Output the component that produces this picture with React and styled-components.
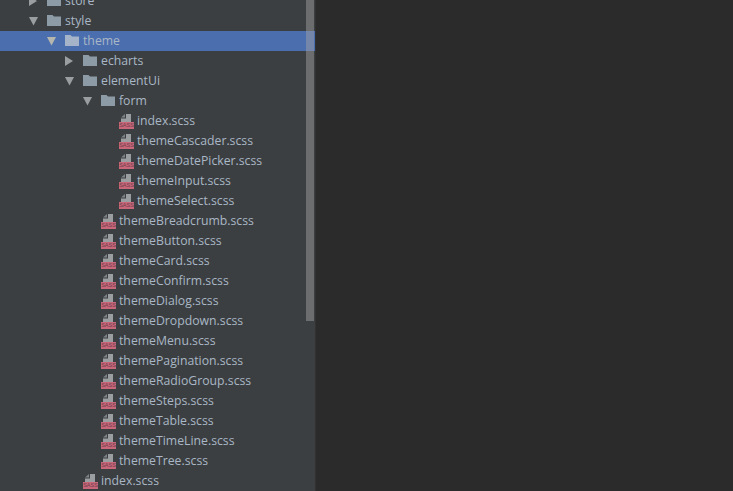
import * as React from "react";
import styled, { createGlobalStyle } from "styled-components";

const GlobalStyle = createGlobalStyle`
  html, body {
    margin: 0;
    height: 100%;
    overflow: hidden;
    background: #2b2b2b;
  }
`;

//Whole window, tree on the left and the empty editor on the right
const Layout = styled.div`
  display: flex;
  width: 733px;
  height: 491px;
  overflow: hidden;
`;

const Sidebar = styled.div`
  position: relative;
  width: 315px;
  height: 100%;
  flex-shrink: 0;
  background: #3c3f41;
  overflow: hidden;
`;

const Divider = styled.div`
  width: 1px;
  flex-shrink: 0;
  background: #323232;
`;

const Editor = styled.div`
  flex: 1;
  background: #2b2b2b;
`;

//Tree is scrolled so the first row is cut off at the top
const Tree = styled.div`
  display: flex;
  flex-direction: column;
  margin-top: -9px;
`;

const Row = styled.div`
  display: flex;
  align-items: center;
  height: 20px;
  flex-shrink: 0;
  padding-left: ${({ $indent }) => $indent}px;
  background: ${({ $selected }) => ($selected ? "#4b6eaf" : "transparent")};
`;

const Arrow = styled.svg`
  width: 9px;
  height: 10px;
  margin-right: 9px;
  margin-bottom: 1px;
  flex-shrink: 0;
`;

const FolderIcon = styled.svg`
  width: 14px;
  height: 11px;
  margin-right: 4px;
  margin-bottom: 1px;
  flex-shrink: 0;
`;

const SassIcon = styled.div`
  position: relative;
  width: 15px;
  height: 20px;
  margin-right: 3px;
  flex-shrink: 0;
`;

const SassSheet = styled.svg`
  position: absolute;
  left: 2px;
  top: 3px;
  width: 10px;
  height: 8px;
`;

const SassBadge = styled.span`
  position: absolute;
  left: 0;
  top: 11px;
  width: 15px;
  height: 7px;
  background: #c8667a;
  color: #6b4049;
  font-family: "Liberation Sans", sans-serif;
  font-size: 5.5px;
  line-height: 7px;
  text-align: center;
  overflow: hidden;
`;

const Label = styled.span`
  font-family: "Open Sans", sans-serif;
  font-size: 12.25px;
  line-height: 20px;
  color: #a9b7c6;
  white-space: nowrap;
`;

const Scrollbar = styled.div`
  position: absolute;
  top: 0;
  right: 1px;
  width: 8px;
  height: 321px;
  background: rgba(166, 166, 166, 0.45);
`;

const rows = [
  { name: "store", depth: 1, folder: true, open: false },
  { name: "style", depth: 1, folder: true, open: true },
  { name: "theme", depth: 2, folder: true, open: true, selected: true },
  { name: "echarts", depth: 3, folder: true, open: false },
  { name: "elementUi", depth: 3, folder: true, open: true },
  { name: "form", depth: 4, folder: true, open: true },
  { name: "index.scss", depth: 5 },
  { name: "themeCascader.scss", depth: 5 },
  { name: "themeDatePicker.scss", depth: 5 },
  { name: "themeInput.scss", depth: 5 },
  { name: "themeSelect.scss", depth: 5 },
  { name: "themeBreadcrumb.scss", depth: 4 },
  { name: "themeButton.scss", depth: 4 },
  { name: "themeCard.scss", depth: 4 },
  { name: "themeConfirm.scss", depth: 4 },
  { name: "themeDialog.scss", depth: 4 },
  { name: "themeDropdown.scss", depth: 4 },
  { name: "themeMenu.scss", depth: 4 },
  { name: "themePagination.scss", depth: 4 },
  { name: "themeRadioGroup.scss", depth: 4 },
  { name: "themeSteps.scss", depth: 4 },
  { name: "themeTable.scss", depth: 4 },
  { name: "themeTimeLine.scss", depth: 4 },
  { name: "themeTree.scss", depth: 4 },
  { name: "index.scss", depth: 3 },
];

const TreeArrow = ({ open, selected }) => (
  <Arrow viewBox="0 0 9 10">
    {open ? (
      <path d="M0 1 H9 L4.5 9.5 Z" fill={selected ? "#b5b6ad" : "#9a9ea1"} />
    ) : (
      <path d="M0 0 L8 5 L0 10 Z" fill="#9a9ea1" />
    )}
  </Arrow>
);

const Folder = ({ selected }) => (
  <FolderIcon viewBox="0 0 14 11">
    <path d="M0 0 H5.5 L7 1.5 H14 V11 H0 Z" fill={selected ? "#a5b4c8" : "#8c9ba5"} />
  </FolderIcon>
);

const SassFile = () => (
  <SassIcon>
    <SassSheet viewBox="0 0 10 8">
      <path d="M5 0 H10 V8 H0 V4.5 H5 Z" fill="#9a9ea1" />
      <path d="M0 3.5 L4 0 V3.5 Z" fill="#7f8386" />
    </SassSheet>
    <SassBadge>SASS</SassBadge>
  </SassIcon>
);

const App = () => {
  return (
    <Layout>
      <GlobalStyle />
      <Sidebar>
        <Tree>
          {rows.map((row, i) =>
            row.folder ? (
              <Row key={i} $indent={11 + row.depth * 18} $selected={row.selected}>
                <TreeArrow open={row.open} selected={row.selected} />
                <Folder selected={row.selected} />
                <Label>{row.name}</Label>
              </Row>
            ) : (
              <Row key={i} $indent={29 + row.depth * 18}>
                <SassFile />
                <Label>{row.name}</Label>
              </Row>
            )
          )}
        </Tree>
        <Scrollbar />
      </Sidebar>
      <Divider />
      <Editor />
    </Layout>
  );
};

export default App;
